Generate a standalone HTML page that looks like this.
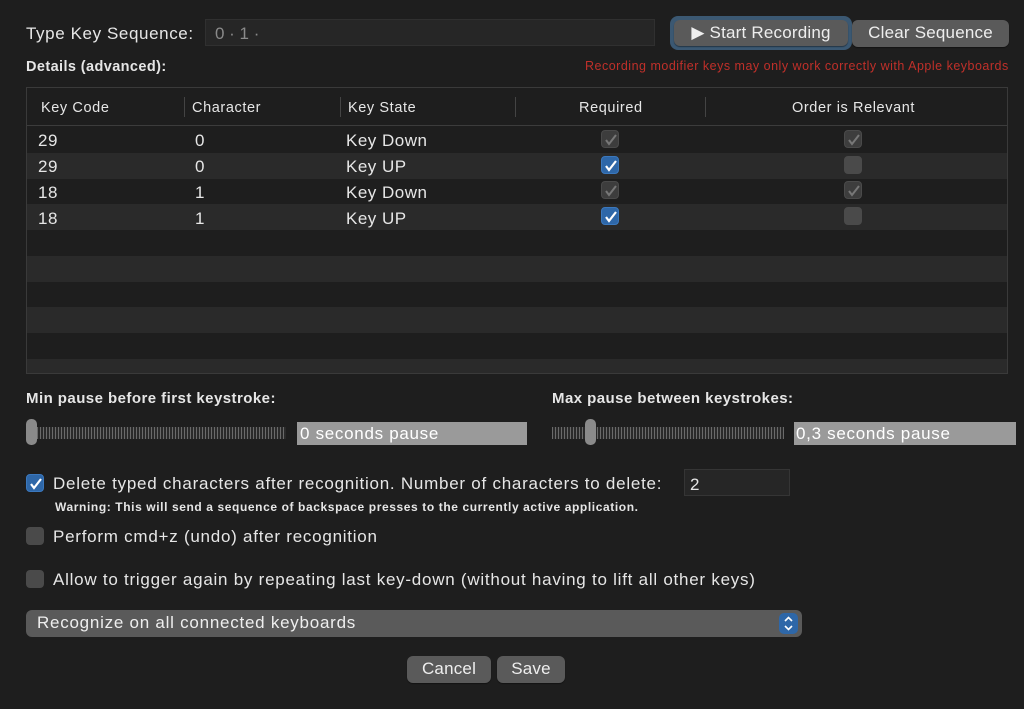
<!DOCTYPE html>
<html><head><meta charset="utf-8"><style>
*{box-sizing:border-box;margin:0;padding:0}
body{width:1024px;height:709px;background:#1e1e1e;font-family:"Liberation Sans",sans-serif;color:#e6e6e6;position:relative;overflow:hidden}
.a{position:absolute;white-space:nowrap}
.btn{position:absolute;background:#5a5a5a;border-radius:6px;color:#eee;font-size:17px;text-align:center;box-shadow:0 1px 1px rgba(0,0,0,.4);letter-spacing:.2px}
.cb{position:absolute;width:18px;height:18px;border-radius:4px;background:#3d3d3d;border:1px solid #4a4a4a}
.cb.on{background:#2e67a8;border-color:#3b78bd}
.cb svg{position:absolute;left:2px;top:2px}
.row{position:absolute;left:27px;width:980px;height:26px}
.h{font-size:14.5px;letter-spacing:.6px}
.t{font-size:17px;letter-spacing:.75px}
</style></head><body>
<div class="a" style="left:26px;top:24px;font-size:17px;letter-spacing:.6px">Type Key Sequence:</div>
<div class="a" style="left:205px;top:19px;width:450px;height:27px;background:#262626;border:1px solid #303030"></div>
<div class="a" style="left:215px;top:24px;font-size:17px;color:#8a8a8a">0 · 1 ·</div>
<div class="a" style="left:670px;top:16px;width:182px;height:34px;border-radius:8px;background:#3b5872"></div>
<div class="btn" style="left:674px;top:20px;width:174px;height:26px;line-height:25px">▶ Start Recording</div>
<div class="btn" style="left:852px;top:20px;width:157px;height:27px;line-height:26px">Clear Sequence</div>
<div class="a" style="left:26px;top:59px;font-size:14.5px;font-weight:bold;letter-spacing:.4px">Details (advanced):</div>
<div class="a" style="left:585px;top:59px;font-size:12.5px;letter-spacing:.5px;color:#c0302a">Recording modifier keys may only work correctly with Apple keyboards</div>
<div class="a" style="left:26px;top:87px;width:982px;height:287px;border:1px solid #3a3a3a;background:#1e1e1e"></div>
<div class="a" style="left:27px;top:125px;width:980px;height:1px;background:#3c3c3c"></div>
<div class="a" style="left:184px;top:97px;width:1px;height:20px;background:#444"></div>
<div class="a" style="left:340px;top:97px;width:1px;height:20px;background:#444"></div>
<div class="a" style="left:515px;top:97px;width:1px;height:20px;background:#444"></div>
<div class="a" style="left:705px;top:97px;width:1px;height:20px;background:#444"></div>
<div class="a h" style="left:41px;top:100px">Key Code</div>
<div class="a h" style="left:192px;top:100px">Character</div>
<div class="a h" style="left:348px;top:100px">Key State</div>
<div class="a h" style="left:579px;top:100px">Required</div>
<div class="a h" style="left:792px;top:100px">Order is Relevant</div>
<div class="row" style="top:153px;background:#2a2a2a"></div>
<div class="row" style="top:204px;background:#2a2a2a"></div>
<div class="row" style="top:256px;background:#2a2a2a"></div>
<div class="row" style="top:307px;background:#2a2a2a"></div>
<div class="row" style="top:359px;height:14px;background:#2a2a2a"></div>
<div class="a" style="left:38px;top:128px;font-size:17px;line-height:26px;letter-spacing:.5px">29<br>29<br>18<br>18</div>
<div class="a" style="left:195px;top:128px;font-size:17px;line-height:26px">0<br>0<br>1<br>1</div>
<div class="a" style="left:346px;top:128px;font-size:17px;line-height:26px;letter-spacing:.5px">Key Down<br>Key UP<br>Key Down<br>Key UP</div>
<div class="cb" style="left:601px;top:130px"><svg width="14" height="14"><path d="M2 7l3 4 7-9" stroke="#777" stroke-width="2" fill="none"/></svg></div>
<div class="cb on" style="left:601px;top:156px"><svg width="14" height="14"><path d="M2 7l3 4 7-9" stroke="#fff" stroke-width="2.2" fill="none"/></svg></div>
<div class="cb" style="left:601px;top:181px"><svg width="14" height="14"><path d="M2 7l3 4 7-9" stroke="#777" stroke-width="2" fill="none"/></svg></div>
<div class="cb on" style="left:601px;top:207px"><svg width="14" height="14"><path d="M2 7l3 4 7-9" stroke="#fff" stroke-width="2.2" fill="none"/></svg></div>
<div class="cb" style="left:844px;top:130px"><svg width="14" height="14"><path d="M2 7l3 4 7-9" stroke="#777" stroke-width="2" fill="none"/></svg></div>
<div class="cb" style="left:844px;top:156px;background:#4a4a4a"></div>
<div class="cb" style="left:844px;top:181px"><svg width="14" height="14"><path d="M2 7l3 4 7-9" stroke="#777" stroke-width="2" fill="none"/></svg></div>
<div class="cb" style="left:844px;top:207px;background:#4a4a4a"></div>
<div class="a" style="left:26px;top:390px;font-size:15px;font-weight:bold;letter-spacing:.45px">Min pause before first keystroke:</div>
<div class="a" style="left:552px;top:390px;font-size:15px;font-weight:bold;letter-spacing:.45px">Max pause between keystrokes:</div>
<div class="a" style="left:34px;top:427px;width:252px;height:12px;background:repeating-linear-gradient(90deg,#6a6a6a 0 1px,#2a2a2a 1px 3px)"></div>
<div class="a" style="left:26px;top:419px;width:11px;height:26px;border-radius:5px;background:#8a8a8a"></div>
<div class="a" style="left:297px;top:422px;width:230px;height:23px;background:#9a9a9a;color:#fff;font-size:17px;letter-spacing:.7px;padding-left:3px;line-height:24px">0 seconds pause</div>
<div class="a" style="left:552px;top:427px;width:232px;height:12px;background:repeating-linear-gradient(90deg,#6a6a6a 0 1px,#2a2a2a 1px 3px)"></div>
<div class="a" style="left:585px;top:419px;width:11px;height:26px;border-radius:5px;background:#8a8a8a"></div>
<div class="a" style="left:794px;top:422px;width:222px;height:23px;background:#9a9a9a;color:#fff;font-size:17px;letter-spacing:.7px;padding-left:2px;line-height:24px">0,3 seconds pause</div>
<div class="cb on" style="left:26px;top:474px"><svg width="14" height="14"><path d="M2 7l3 4 7-9" stroke="#fff" stroke-width="2.2" fill="none"/></svg></div>
<div class="a t" style="left:53px;top:474px">Delete typed characters after recognition. Number of characters to delete:</div>
<div class="a" style="left:684px;top:469px;width:106px;height:27px;background:#262626;border:1px solid #353535;font-size:17px;padding:5px 0 0 5px">2</div>
<div class="a" style="left:55px;top:500px;font-size:12px;font-weight:bold;letter-spacing:.6px">Warning: This will send a sequence of backspace presses to the currently active application.</div>
<div class="cb" style="left:26px;top:527px;background:#4a4a4a"></div>
<div class="a t" style="left:53px;top:527px">Perform cmd+z (undo) after recognition</div>
<div class="cb" style="left:26px;top:570px;background:#4a4a4a"></div>
<div class="a t" style="left:53px;top:570px">Allow to trigger again by repeating last key-down (without having to lift all other keys)</div>
<div class="a" style="left:26px;top:610px;width:776px;height:27px;background:#5a5a5a;border-radius:6px;font-size:17px;letter-spacing:.75px;padding:3px 0 0 11px;color:#eee">Recognize on all connected keyboards</div>
<div class="a" style="left:779px;top:613px;width:19px;height:21px;background:#2e67a8;border-radius:5px"><svg width="19" height="21"><path d="M6 8l3.5-3.5L13 8M6 13l3.5 3.5L13 13" stroke="#fff" stroke-width="1.6" fill="none"/></svg></div>
<div class="btn" style="left:407px;top:656px;width:84px;height:27px;line-height:26px">Cancel</div>
<div class="btn" style="left:497px;top:656px;width:68px;height:27px;line-height:26px">Save</div>
</body></html>
